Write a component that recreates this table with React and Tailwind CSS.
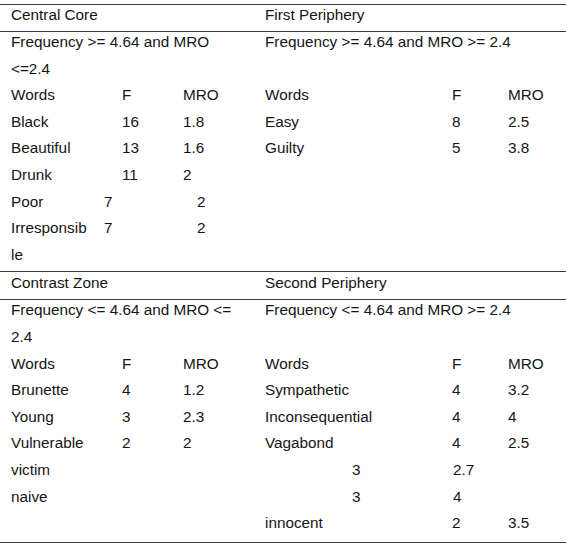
import React from "react";

// column grid shared by every row: words | F | MRO | words | F | MRO
const rowGrid =
  "grid grid-cols-[111px_61px_82px_187px_56px_1fr] pl-[11px] h-[26.6px] leading-[20px]";

const Cell = ({ children, className = "" }) => (
  <div className={"whitespace-nowrap " + className}>{children}</div>
);

const HeaderRow = ({ left, right, className = "" }) => (
  <div
    className={
      "grid grid-cols-[254px_1fr] pl-[11px] leading-[20px] border-y border-[#3a3a3a] " +
      className
    }
  >
    <Cell>{left}</Cell>
    <Cell>{right}</Cell>
  </div>
);

const Row = ({ cells = [] }) => (
  <div className={rowGrid}>
    {cells.map((c, i) =>
      c === null ? (
        <div key={i} />
      ) : typeof c === "string" ? (
        <Cell key={i}>{c}</Cell>
      ) : (
        <Cell key={i} className={c.cls}>
          {c.t}
        </Cell>
      ),
    )}
  </div>
);

const App = () => {
  return (
    <div
      className="w-[567px] h-[547px] bg-white text-[#151515] text-[15.3px] pt-[4px]"
      style={{ fontFamily: '"Liberation Sans", Arial, sans-serif' }}
    >
      <div className="w-[566px]">
        {/* --- Top section --- */}
        <HeaderRow left="Central Core" right="First Periphery" className="h-[28px]" />
        <div className={rowGrid}>
          <Cell className="col-span-3">Frequency &gt;= 4.64 and MRO</Cell>
          <Cell className="col-span-3">Frequency &gt;= 4.64 and MRO &gt;= 2.4</Cell>
        </div>
        <Row cells={["<=2.4"]} />
        <Row cells={["Words", "F", "MRO", "Words", "F", "MRO"]} />
        <Row cells={["Black", "16", "1.8", "Easy", "8", "2.5"]} />
        <Row cells={["Beautiful", "13", "1.6", "Guilty", "5", "3.8"]} />
        <Row cells={["Drunk", "11", "2"]} />
        <Row cells={["Poor", { t: "7", cls: "-ml-[18px]" }, { t: "2", cls: "pl-[14px]" }]} />
        <Row cells={["Irresponsib", { t: "7", cls: "-ml-[18px]" }, { t: "2", cls: "pl-[14px]" }]} />
        <Row cells={["le"]} />

        {/* --- Bottom section --- */}
        <HeaderRow left="Contrast Zone" right="Second Periphery" className="h-[29px] pt-[1px]" />
        <div className={rowGrid}>
          <Cell className="col-span-3">Frequency &lt;= 4.64 and MRO &lt;=</Cell>
          <Cell className="col-span-3">Frequency &lt;= 4.64 and MRO &gt;= 2.4</Cell>
        </div>
        <Row cells={["2.4"]} />
        <Row cells={["Words", "F", "MRO", "Words", "F", "MRO"]} />
        <Row cells={["Brunette", "4", "1.2", "Sympathetic", "4", "3.2"]} />
        <Row cells={["Young", "3", "2.3", "Inconsequential", "4", "4"]} />
        <Row cells={["Vulnerable", "2", "2", "Vagabond", "4", "2.5"]} />
        <Row cells={["victim", null, null, { t: "3", cls: "pl-[87px]" }, { t: "2.7", cls: "pl-[1px]" }]} />
        <Row cells={["naive", null, null, { t: "3", cls: "pl-[87px]" }, { t: "4", cls: "pl-[1px]" }]} />
        <div className="border-b border-[#3a3a3a] pb-[2px]">
          <Row cells={[null, null, null, "innocent", "2", "3.5"]} />
        </div>
      </div>
    </div>
  );
};

export default App;
